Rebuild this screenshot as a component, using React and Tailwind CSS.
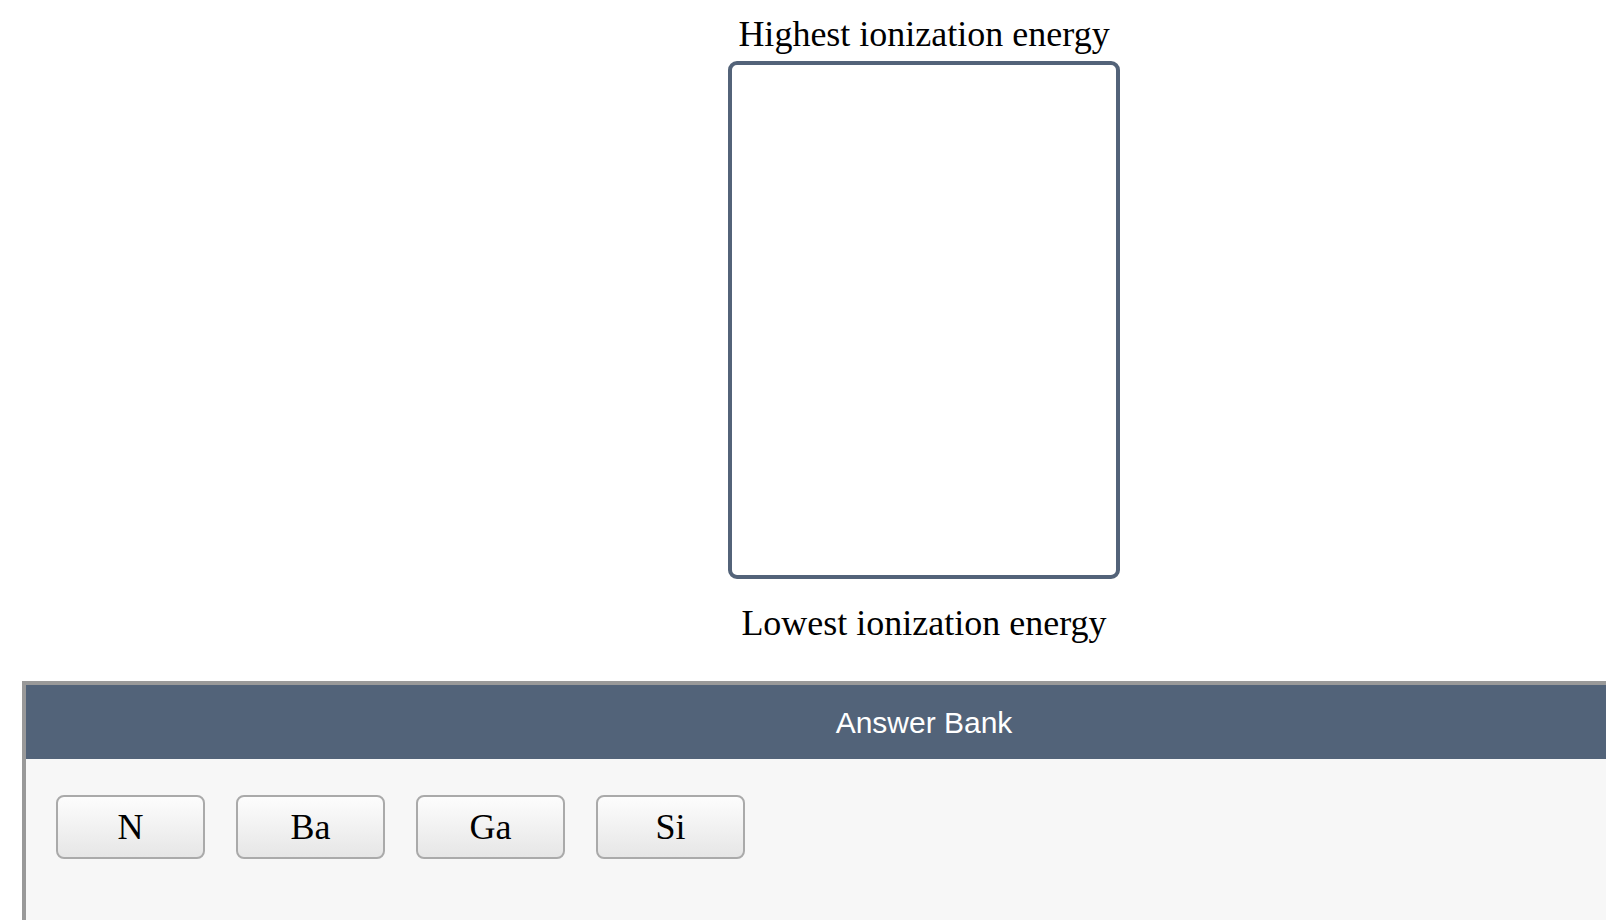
import React from "react"

const serif = { fontFamily: '"Liberation Serif", "Times New Roman", serif' }

const choices = ["N", "Ba", "Ga", "Si"]

const App = () => {
  return (
    <div className="w-[1606px] h-[920px] overflow-hidden bg-white text-black">
      <div className="w-[1848px] flex flex-col items-center">
        {/* 상단 라벨 */}
        <div
          className="pt-[16px] text-[36px] leading-[36px]"
          style={serif}
        >
          Highest ionization energy
        </div>

        {/* 드롭 영역 */}
        <div className="mt-[9px] w-[392px] h-[518px] border-4 border-[#536379] rounded-[9px] bg-white" />

        <div
          className="mt-[26px] text-[36px] leading-[36px]"
          style={serif}
        >
          Lowest ionization energy
        </div>

        {/* 답안 은행 */}
        <div className="mt-[40px] self-stretch mx-[22px] border-t-4 border-l-4 border-r-4 border-[#999999] bg-[#f7f7f7]">
          <div
            className="h-[74px] bg-[#526379] text-white text-[30px] flex items-center justify-center"
            style={{ fontFamily: '"Liberation Sans", Arial, sans-serif' }}
          >
            Answer Bank
          </div>
          <div className="flex gap-[31px] pl-[30px] pt-[36px] h-[200px]">
            {choices.map((c) => (
              <div
                key={c}
                className="w-[149px] h-[64px] flex items-center justify-center rounded-[8px] border-2 border-[#aaaaaa] bg-gradient-to-b from-[#fdfdfd] to-[#e6e6e6] text-[36px]"
                style={serif}
              >
                {c}
              </div>
            ))}
          </div>
        </div>
      </div>
    </div>
  )
}

export default App
